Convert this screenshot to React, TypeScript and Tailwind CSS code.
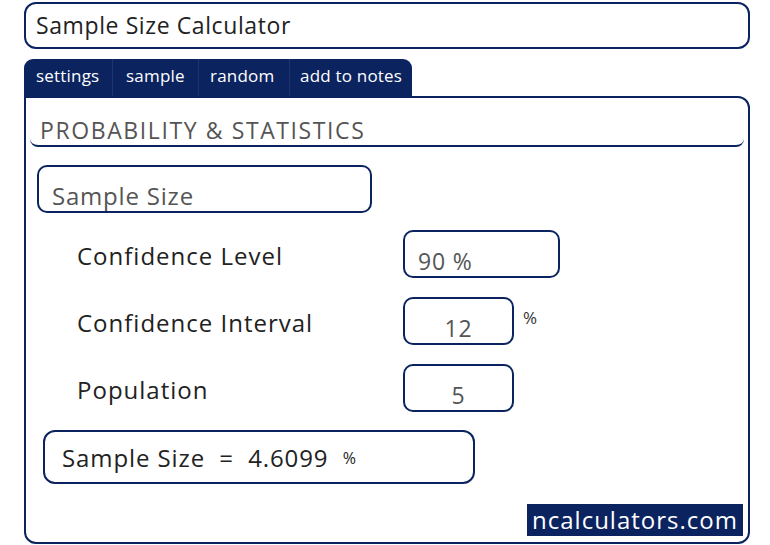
const navy = "border-[#0b2460]";

function InputBox({ value, wide }: { value: string; wide?: boolean }) {
	return (
		<div
			className={`h-[48px] rounded-[10px] border-2 ${navy} flex items-end leading-[30px] text-[23px] tracking-[0.8px] text-[#555] ${wide ? "w-[157px] pl-[13px]" : "w-[111px] justify-center"}`}
		>
			{value}
		</div>
	);
}

export default function App() {
	const rows = [
		{ label: "Confidence Level", value: "90 %", wide: true, unit: "" },
		{ label: "Confidence Interval", value: "12", wide: false, unit: "%" },
		{ label: "Population", value: "5", wide: false, unit: "" },
	];

	const tabs = [
		{ label: "settings", w: "w-[89px]", pl: "pl-[12px]" },
		{ label: "sample", w: "w-[86px]", pl: "pl-[13px]" },
		{ label: "random", w: "w-[91px]", pl: "pl-[11px]" },
		{ label: "add to notes", w: "w-[122px]", pl: "pl-[10px]" },
	];

	return (
		<div className="w-[770px] h-[545px] bg-white pl-[24px] pr-[20px] pt-[2px] font-['Open_Sans',sans-serif] text-[#222] overflow-hidden">
			<div className={`h-[47px] rounded-[12px] border-2 ${navy} flex items-center pl-[10px] text-[23px] tracking-[0.6px]`}>
				Sample Size Calculator
			</div>

			<nav className="mt-[10px] flex w-[388px] h-[37px] bg-[#0b2460] rounded-t-[9px] text-white text-[17px] tracking-[0.2px]">
				{tabs.map((t, i) => (
					<span
						key={t.label}
						className={`${t.w} ${t.pl} flex items-center pb-[3px] ${i < tabs.length - 1 ? "border-r border-[#1c3470]" : ""}`}
					>
						{t.label}
					</span>
				))}
			</nav>

			<div className={`h-[448px] rounded-b-[12px] rounded-tr-[12px] border-2 ${navy} relative`}>
				<div className="mx-[4px] h-[49px] border-b-2 border-[#0b2460] rounded-b-[8px] flex items-end pl-[10px] leading-[30px] text-[23px] tracking-[1.6px] text-[#555]">
					PROBABILITY &amp; STATISTICS
				</div>

				<div className={`mt-[18px] ml-[11px] w-[335px] h-[48px] rounded-[10px] border-2 ${navy} flex items-end pl-[13px] leading-[30px] text-[24px] tracking-[0.8px] text-[#555]`}>
					Sample Size
				</div>

				<div className="mt-[17px] flex flex-col gap-[19px]">
					{rows.map(r => (
						<div key={r.label} className="flex items-center">
							<span className="w-[377px] pl-[51px] text-[24px] tracking-[1px] text-[#222] mt-[4px]">{r.label}</span>
							<InputBox value={r.value} wide={r.wide} />
							{r.unit && <span className="ml-[9px] -mt-[6px] text-[17px] text-[#333]">{r.unit}</span>}
						</div>
					))}
				</div>

				<div className={`mt-[18px] ml-[17px] w-[432px] h-[54px] rounded-[12px] border-2 ${navy} flex items-center pl-[17px] pt-[2px] text-[24px] tracking-[0.9px] text-[#222] whitespace-pre`}>
					Sample Size  =  4.6099  <span className="text-[16px]">%</span>
				</div>

				<div className="absolute right-[5px] bottom-[6px] w-[216px] h-[32px] bg-[#0b2460] text-white text-[24px] tracking-[1px] flex items-center justify-center">
					ncalculators.com
				</div>
			</div>
		</div>
	);
}
